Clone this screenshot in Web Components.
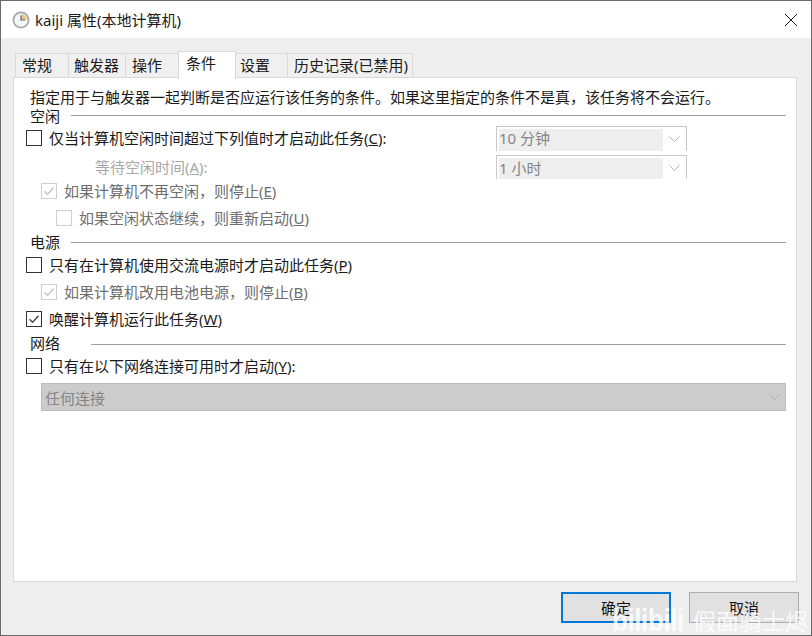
<!DOCTYPE html>
<html>
<head>
<meta charset="utf-8">
<style>
    html, body { margin: 0; padding: 0; }
    body { font: 15px "Noto Sans", "Noto Sans CJK SC", sans-serif; color: #1a1a1a; }
    cond-row.r1 { height: 25px; }
    cond-row.r2 { height: 24px; margin-top: 4px; }
    cond-row.r3 { height: 24px; }
    cond-row.r4 { height: 24px; margin-top: 3px; }
    cond-row.r5 { height: 24px; margin-top: 1px; }
    cond-row.r6 { height: 24px; margin-top: 3px; }
    cond-row.r7 { height: 24px; margin-top: 3px; }
    cond-row.r8 { height: 24px; margin-top: 1px; }
    group-head { margin-top: 4px; }
    group-head.first { margin-top: 0; }
    group-head.net { margin-top: 4px; }
</style>
</head>
<body>
<task-dialog>
    <span slot="title">kaiji 属性(本地计算机)</span>

    <tab-item slot="tabs" w="54" pad="6">常规</tab-item>
    <tab-item slot="tabs" w="58" pad="5">触发器</tab-item>
    <tab-item slot="tabs" w="54" pad="6">操作</tab-item>
    <tab-item slot="tabs" w="58" pad="7" active>条件</tab-item>
    <tab-item slot="tabs" w="53" pad="4">设置</tab-item>
    <tab-item slot="tabs" w="126" pad="6">历史记录(已禁用)</tab-item>

    <div class="intro" style="height:20px;line-height:20px;margin-left:16px;white-space:nowrap">指定用于与触发器一起判断是否应运行该任务的条件。如果这里指定的条件不是真，该任务将不会运行。</div>

    <group-head class="first" line="41" top="8">空闲</group-head>
    <cond-row class="r1" indent="12">
        <check-box></check-box>
        <span>仅当计算机空闲时间超过下列值时才启动此任务(<u>C</u>):</span>
        <drop-box slot="right" style="--lh:19px">10 分钟</drop-box>
    </cond-row>
    <cond-row class="r2" indent="81" tone="faint">
        <span>等待空闲时间(<u>A</u>):</span>
        <drop-box slot="right">1 小时</drop-box>
    </cond-row>
    <cond-row class="r3" indent="27" tone="dim">
        <check-box checked disabled></check-box>
        <span>如果计算机不再空闲，则停止(<u>E</u>)</span>
    </cond-row>
    <cond-row class="r4" indent="42" tone="dim">
        <check-box disabled></check-box>
        <span>如果空闲状态继续，则重新启动(<u>U</u>)</span>
    </cond-row>

    <group-head line="41" top="9">电源</group-head>
    <cond-row class="r5" indent="12">
        <check-box></check-box>
        <span>只有在计算机使用交流电源时才启动此任务(<u>P</u>)</span>
    </cond-row>
    <cond-row class="r6" indent="27" tone="dim">
        <check-box checked disabled></check-box>
        <span>如果计算机改用电池电源，则停止(<u>B</u>)</span>
    </cond-row>
    <cond-row class="r7" indent="12">
        <check-box checked></check-box>
        <span>唤醒计算机运行此任务(<u>W</u>)</span>
    </cond-row>

    <group-head class="net" line="61" top="10">网络</group-head>
    <cond-row class="r8" indent="12">
        <check-box></check-box>
        <span>只有在以下网络连接可用时才启动(<u>Y</u>):</span>
    </cond-row>
    <wide-select>任何连接</wide-select>

    <dlg-button slot="buttons" primary>确定</dlg-button>
    <dlg-button slot="buttons">取消</dlg-button>

    <water-mark slot="overlay"></water-mark>
</task-dialog>

<script>
class taskDialog extends HTMLElement {
    constructor() {
        super();
        this.attachShadow({mode: "open"});
        this.shadowRoot.innerHTML = `
            <style>
                :host {
                    display: block;
                    width: 812px;
                    height: 636px;
                    position: relative;
                    overflow: hidden;
                }
                .win {
                    box-sizing: border-box;
                    width: 812px;
                    height: 636px;
                    border: 1px solid #6a6a6a;
                    background: #eeeeee;
                    display: flex;
                    flex-direction: column;
                }
                .title {
                    height: 37px;
                    background: #fff;
                    display: flex;
                    align-items: center;
                    padding: 0 14px 0 11px;
                    flex: none;
                }
                .title span { flex: 1; margin-left: 5px; font-size: 15px; color: #1a1a1a; }
                .tabs {
                    display: flex;
                    align-items: flex-end;
                    height: 40px;
                    padding-left: 15px;
                    flex: none;
                    position: relative;
                    z-index: 1;
                }
                .panel {
                    box-sizing: border-box;
                    margin-left: 12px;
                    width: 784px;
                    height: 505px;
                    margin-top: -1px;
                    border: 1px solid #d9d9d9;
                    background: #fff;
                    padding: 9px 0 0 0;
                    flex: none;
                }
                .buttons {
                    display: flex;
                    justify-content: flex-end;
                    gap: 18px;
                    padding: 10px 12px 0 0;
                }
            </style>
            <div class="win">
                <div class="title">
                    <svg width="18" height="18" viewBox="0 0 18 18">
                        <circle cx="9" cy="9" r="7.6" fill="#f4f5f6" stroke="#a5a9ae" stroke-width="1.8"/>
                        <path d="M9 9V3a6 6 0 0 1 6 6z" fill="#ecc98a"/>
                        <path d="M9 4.5V9h4" fill="none" stroke="#5f6368" stroke-width="1.2"/>
                    </svg>
                    <span><slot name="title"></slot></span>
                    <svg width="12" height="12" viewBox="0 0 12 12">
                        <path d="M0 0L12 12M12 0L0 12" stroke="#1a1a1a" stroke-width="1"/>
                    </svg>
                </div>
                <div class="tabs"><slot name="tabs"></slot></div>
                <div class="panel"><slot></slot></div>
                <div class="buttons"><slot name="buttons"></slot></div>
            </div>
            <slot name="overlay"></slot>`;
    }
}

class tabItem extends HTMLElement {
    constructor() {
        super();
        this.attachShadow({mode: "open"});
    }

    connectedCallback() {
        const on = this.hasAttribute("active");
        this.shadowRoot.innerHTML = `
            <style>
                :host {
                    display: block;
                    box-sizing: border-box;
                    width: ${this.getAttribute("w")}px;
                    height: ${on ? 28 : 25}px;
                    padding-left: ${this.getAttribute("pad")}px;
                    line-height: ${on ? 23 : 22}px;
                    background: ${on ? "#fff" : "#f0f0f0"};
                    border: 1px solid #d9d9d9;
                    border-bottom: ${on ? "none" : "1px solid #d9d9d9"};
                    margin-left: -1px;
                    white-space: nowrap;
                    position: relative;
                    z-index: ${on ? 2 : 0};
                }
            </style><slot></slot>`;
        if (on) this.style.marginBottom = "-1px";
    }
}

class groupHead extends HTMLElement {
    constructor() {
        super();
        this.attachShadow({mode: "open"});
    }

    connectedCallback() {
        this.shadowRoot.innerHTML = `
            <style>
                :host {
                    display: block;
                    height: 18px;
                    line-height: 18px;
                    position: relative;
                    padding-left: 16px;
                }
                i {
                    position: absolute;
                    left: ${Number(this.getAttribute("line")) + 16}px;
                    right: 10px;
                    top: ${this.getAttribute("top")}px;
                    height: 1px;
                    background: #a0a0a0;
                }
            </style><slot></slot><i></i>`;
    }
}

class condRow extends HTMLElement {
    constructor() {
        super();
        this.attachShadow({mode: "open"});
    }

    connectedCallback() {
        const colors = {dim: "#6e6e6e", faint: "#a8a8a8"};
        this.shadowRoot.innerHTML = `
            <style>
                :host {
                    display: flex;
                    align-items: center;
                    gap: 7px;
                    padding-left: ${this.getAttribute("indent")}px;
                    position: relative;
                    white-space: nowrap;
                    color: ${colors[this.getAttribute("tone")] || "#1a1a1a"};
                }
                .right { position: absolute; left: 482px; top: 1px; bottom: -1px; display: flex; }
            </style><slot></slot><div class="right"><slot name="right"></slot></div>`;
    }
}

class checkBox extends HTMLElement {
    constructor() {
        super();
        this.attachShadow({mode: "open"});
    }

    connectedCallback() {
        const off = this.hasAttribute("disabled");
        const tick = this.hasAttribute("checked")
            ? `<svg width="14" height="14" viewBox="0 0 14 14"><path d="M2.5 7.2L5.6 10.3L11.5 3.8" fill="none" stroke="${off ? "#c4c4c4" : "#444"}" stroke-width="1.4"/></svg>`
            : "";
        this.shadowRoot.innerHTML = `
            <style>
                :host {
                    display: flex;
                    box-sizing: border-box;
                    width: 16px;
                    height: 16px;
                    flex: none;
                    margin-top: 1px;
                    background: #fff;
                    border: 1px solid ${off ? "#cfcfcf" : "#333"};
                }
            </style>${tick}`;
    }
}

class dropBox extends HTMLElement {
    constructor() {
        super();
        this.attachShadow({mode: "open"});
        this.shadowRoot.innerHTML = `
            <style>
                :host {
                    display: flex;
                    box-sizing: border-box;
                    width: 191px;
                    height: 100%;
                    border: 1px solid #c8c8c8;
                    border-bottom: none;
                    padding: 2px 0 0 2px;
                    color: #858585;
                }
                .fill {
                    width: 164px;
                    background: #eeeeee;
                    line-height: var(--lh, 21px);
                    white-space: nowrap;
                    flex: none;
                }
                svg { margin: 7px 0 0 6px; }
            </style>
            <div class="fill"><slot></slot></div>
            <svg width="11" height="7" viewBox="0 0 11 7"><path d="M0.5 0.5L5.5 5.5L10.5 0.5" fill="none" stroke="#b4b4b4"/></svg>`;
    }
}

class wideSelect extends HTMLElement {
    constructor() {
        super();
        this.attachShadow({mode: "open"});
        this.shadowRoot.innerHTML = `
            <style>
                :host {
                    display: flex;
                    align-items: center;
                    justify-content: space-between;
                    box-sizing: border-box;
                    width: 745px;
                    height: 28px;
                    margin: 6px 0 0 27px;
                    padding: 0 5px 0 3px;
                    background: #cccccc;
                    border: 1px solid #bcbcbc;
                    color: #858585;
                }
            </style>
            <span><slot></slot></span>
            <svg width="11" height="7" viewBox="0 0 11 7"><path d="M0.5 0.5L5.5 5.5L10.5 0.5" fill="none" stroke="#adadad"/></svg>`;
    }
}

class dlgButton extends HTMLElement {
    constructor() {
        super();
        this.attachShadow({mode: "open"});
    }

    connectedCallback() {
        const main = this.hasAttribute("primary");
        this.shadowRoot.innerHTML = `
            <style>
                :host {
                    display: flex;
                    align-items: center;
                    justify-content: center;
                    box-sizing: border-box;
                    width: 110px;
                    height: 31px;
                    background: #e1e1e1;
                    border: ${main ? "2px solid #0078d7" : "1px solid #adadad"};
                    color: #111;
                }
            </style><slot></slot>`;
    }
}

class waterMark extends HTMLElement {
    constructor() {
        super();
        this.attachShadow({mode: "open"});
        this.shadowRoot.innerHTML = `
            <style>
                :host {
                    position: absolute;
                    left: 0;
                    top: 0;
                    width: 812px;
                    height: 636px;
                    overflow: hidden;
                    pointer-events: none;
                    color: rgba(255,255,255,.82);
                }
                .logo {
                    position: absolute;
                    left: 612px;
                    top: 603px;
                    font: bold 31px/36px "Liberation Sans", sans-serif;
                    letter-spacing: -0.5px;
                    white-space: nowrap;
                    transform: scaleX(.84);
                    transform-origin: left top;
                }
                .name {
                    position: absolute;
                    left: 693px;
                    top: 603px;
                    font: 23px/34px "Noto Sans CJK SC", sans-serif;
                    white-space: nowrap;
                }
            </style>
            <span class="logo">bilibili</span>
            <span class="name">假面骑士烬</span>`;
    }
}

customElements.define("task-dialog", taskDialog);
customElements.define("tab-item", tabItem);
customElements.define("group-head", groupHead);
customElements.define("cond-row", condRow);
customElements.define("check-box", checkBox);
customElements.define("drop-box", dropBox);
customElements.define("wide-select", wideSelect);
customElements.define("dlg-button", dlgButton);
customElements.define("water-mark", waterMark);
</script>
</body>
</html>
